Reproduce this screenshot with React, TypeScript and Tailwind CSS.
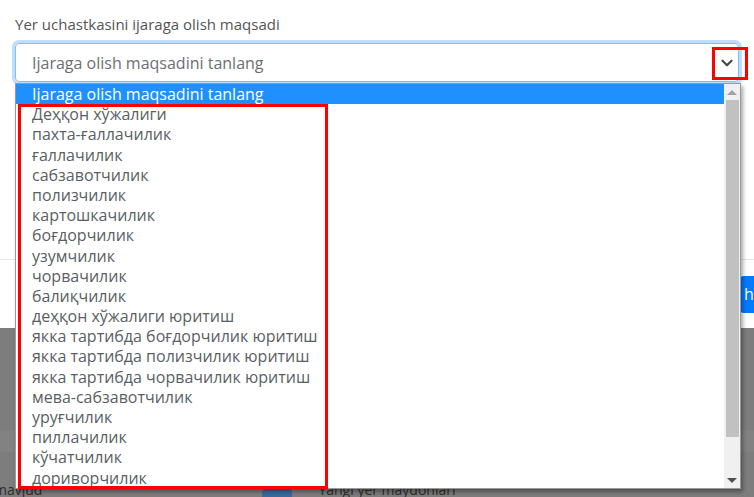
import { ChevronDown } from 'lucide-react'

const options = [
  'Деҳқон хўжалиги',
  'пахта-ғаллачилик',
  'ғаллачилик',
  'сабзавотчилик',
  'полизчилик',
  'картошкачилик',
  'боғдорчилик',
  'узумчилик',
  'чорвачилик',
  'балиқчилик',
  'деҳқон хўжалиги юритиш',
  'якка тартибда боғдорчилик юритиш',
  'якка тартибда полизчилик юритиш',
  'якка тартибда чорвачилик юритиш',
  'мева-сабзавотчилик',
  'уруғчилик',
  'пиллачилик',
  'кўчатчилик',
  'дориворчилик',
]

export default function App() {
  return (
    <div className="relative w-[754px] h-[497px] overflow-hidden bg-white font-['Open_Sans',sans-serif]">
      {/* page behind the open list */}
      <div className="flex flex-col h-full">
        <div className="bg-white px-[15px] pt-[13px] h-[259px]">
          <label className="block text-[15px] leading-[22px] text-[#555]">
            Yer uchastkasini ijaraga olish maqsadi
          </label>
          <div className="mt-[8px] h-[39px] flex items-center justify-between rounded-[4px] border border-[#80bdff] shadow-[0_0_0_3px_rgba(0,123,255,0.25)] pl-[16px] pr-[2px]">
            <span className="text-[16px] text-[#6b6f73]">Ijaraga olish maqsadini tanlang</span>
            <ChevronDown className="w-[18px] h-[18px] text-[#4a4a4a]" strokeWidth={3} />
          </div>
        </div>
        <div className="border-t border-[#e5e5e5] bg-white h-[69px] flex items-center justify-end">
          <div className="h-[37px] w-[60px] -mr-[46px] rounded-[4px] bg-[#007bff] text-white text-[16px] flex items-center pl-[4px]">
            h
          </div>
        </div>
        <div className="flex-1 bg-[#7d7d7d] flex flex-col">
          <div className="h-[102px]" />
          <div className="h-[22px] bg-[#828282]" />
          <div className="flex-1" />
          <div className="h-[13px] flex items-end text-[14px] leading-[14px] text-[#2d2d2d]">
            <span className="-ml-[6px]">mavjud</span>
            <div className="ml-[220px] w-[30px] h-[9px] rounded-t-[5px] bg-[#3d6a9a]" />
            <span className="ml-[26px]">Yangi yer maydonlari</span>
          </div>
        </div>
      </div>

      {/* open option list */}
      <div className="absolute left-[15px] top-[83px] w-[726px] h-[406px] bg-white border border-[#9a9a9a] shadow-[2px_3px_4px_rgba(0,0,0,0.35)] flex">
        <ul className="flex-1 text-[16px] text-[#5a5f63]">
          <li className="h-[20.2px] leading-[20px] pl-[16px] bg-[#1e90ff] text-white">
            Ijaraga olish maqsadini tanlang
          </li>
          {options.map(o => (
            <li key={o} className="h-[20.2px] leading-[20px] pl-[16px]">
              {o}
            </li>
          ))}
        </ul>
        <div className="w-[16px] bg-[#f0f0f0] flex flex-col items-center">
          <div className="h-[16px] flex items-center justify-center">
            <div className="w-0 h-0 border-l-[5px] border-r-[5px] border-b-[5px] border-l-transparent border-r-transparent border-b-[#a3a3a3]" />
          </div>
          <div className="w-[13px] h-[337px] bg-[#c1c1c1]" />
          <div className="flex-1" />
          <div className="h-[16px] flex items-center justify-center">
            <div className="w-0 h-0 border-l-[5px] border-r-[5px] border-t-[5px] border-l-transparent border-r-transparent border-t-[#505050]" />
          </div>
        </div>
      </div>

      {/* red annotation boxes */}
      <div className="absolute left-[18px] top-[104px] w-[310px] h-[385px] border-[3px] border-[#ff0000]" />
      <div className="absolute left-[712px] top-[47px] w-[36px] h-[33px] border-[3px] border-[#ff0000]" />
    </div>
  )
}
